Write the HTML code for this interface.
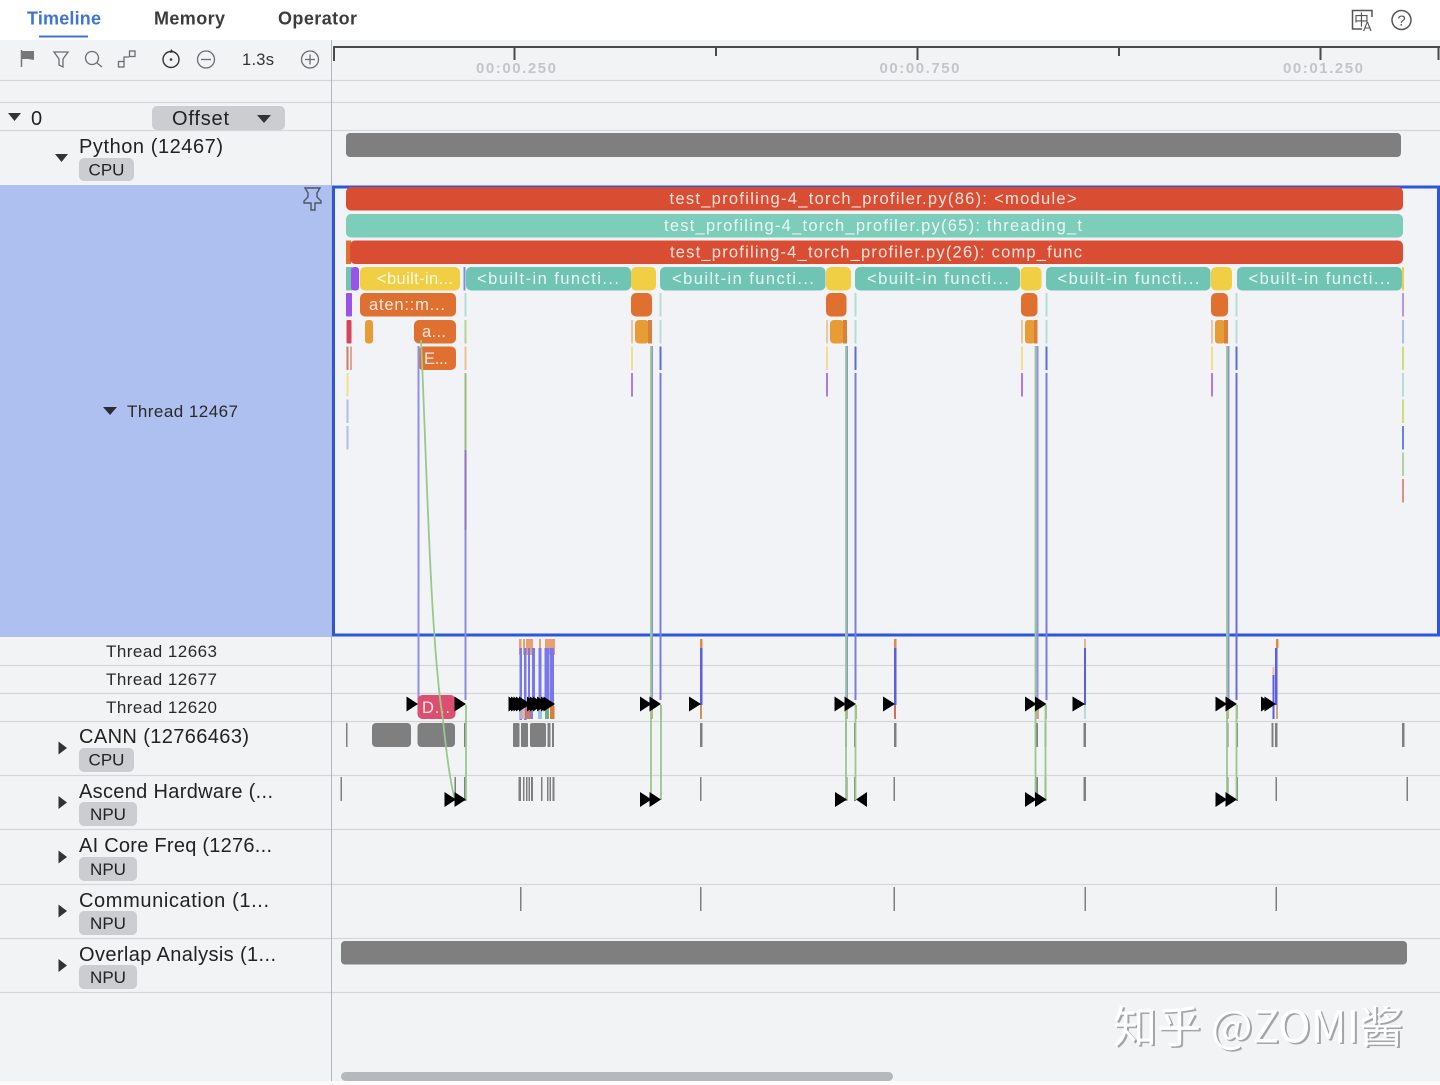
<!DOCTYPE html>
<html><head><meta charset="utf-8"><style>
html,body{margin:0;padding:0;background:#f2f3f5;width:1440px;height:1085px;overflow:hidden}
svg{display:block}
text{font-family:"Liberation Sans","Noto Sans CJK SC",sans-serif}
.l{font-size:20px;fill:#222}
.t{font-size:17px;fill:#2a2a2a}
.b{font-size:16.5px;fill:#fff;text-anchor:middle;opacity:.85}
.p{font-size:17px;fill:#222;text-anchor:middle}
.r{font-size:15px;fill:#c3c5c8;font-weight:bold;text-anchor:middle}
.ic{fill:none;stroke:#6b6e72;stroke-width:1.3}
.d{fill:none;stroke:#555;stroke-width:1.5}
.s{stroke:#d5d6d9;stroke-width:1.3}
</style></head><body>
<svg width="1440" height="1085" viewBox="0 0 1440 1085" xmlns="http://www.w3.org/2000/svg">
<rect width="1440" height="1085" fill="#f2f3f5"/>
<rect width="1440" height="40" fill="#fff"/>
<text x="27" y="24.500" font-size="18" font-weight="bold" fill="#3f74d0" textLength="74">Timeline</text>
<text x="154" y="24.500" font-size="18" font-weight="bold" fill="#3c3c3c" textLength="71">Memory</text>
<text x="278" y="24.500" font-size="18" font-weight="bold" fill="#3c3c3c" textLength="79">Operator</text>
<rect x="39" y="35.500" width="49" height="2" fill="#3f74d0"/>
<!-- top right icons -->
<path d="M1362 29H1352.500V10.500H1372V17" class="d"/>
<text x="1354" y="25" font-size="15" fill="#555" style="font-family:'Noto Sans CJK SC',sans-serif">中</text>
<text x="1363" y="31" font-size="13" fill="#555">A</text>
<circle cx="1401.500" cy="20" r="9.500" class="d"/>
<text x="1401.500" y="25.500" font-size="15" fill="#555" text-anchor="middle">?</text>
<!-- toolbar icons -->
<path d="M21.500 50V67" stroke="#777" stroke-width="1.500"/><path d="M22 51H34V60L28 59H22Z" fill="#777"/>
<path d="M54 52H68L63 59V67L59 65V59Z" class="ic"/>
<circle cx="92" cy="58" r="6.500" class="ic"/><path d="M97 63L102 67" class="ic"/>
<rect x="118.500" y="61.500" width="5.500" height="5.500" class="ic"/><rect x="129.500" y="51" width="5.500" height="5.500" class="ic"/><path d="M124 61V57H129" class="ic"/>
<circle cx="171" cy="59.500" r="8" fill="none" stroke="#333" stroke-width="1.400"/><circle cx="171" cy="59.500" r="1.300" fill="#333"/><path d="M171 49L174 52L170 53Z" fill="#333"/>
<circle cx="206" cy="59.500" r="8.500" class="ic"/><path d="M201 59.500H211" class="ic"/>
<text x="258" y="65" font-size="16.500" fill="#333" text-anchor="middle" textLength="32">1.3s</text>
<circle cx="310" cy="59.500" r="8.500" class="ic"/><path d="M305 59.500H315M310 54.500V64.500" class="ic"/>
<!-- ruler -->
<path d="M333 47H1440" stroke="#4a4a4a" stroke-width="2"/>
<path d="M334 47V61M514.500 47V60M716 47V56M917.500 47V60M1119 47V56M1320.500 47V60M1438.500 47V60" stroke="#4a4a4a" stroke-width="2"/>
<text x="516" y="73" class="r" textLength="80">00:00.250</text><text x="919.500" y="73" class="r" textLength="80">00:00.750</text><text x="1323" y="73" class="r" textLength="80">00:01.250</text>
<!-- row lines -->
<g class="s">
<path d="M0 80.500H1440M0 102.500H1440M0 130.500H1440M0 665.500H1440M0 693.500H1440M0 721.500H1440M0 775.500H1440M0 829.500H1440M0 884.500H1440M0 938.500H1440M0 992.500H1440"/>
</g>
<!-- left selected -->
<rect x="0" y="185" width="332" height="452" fill="#aec0f0"/>
<path d="M331.500 40V1081" stroke="#b4b6ba" stroke-width="1"/>
<rect x="333.500" y="187" width="1105" height="448" fill="#f2f3f6" stroke="#2c55e0" stroke-width="3"/>
<!-- pin -->
<path d="M305 188H320L317 193V197L321 201V203H315V210H311V203H304V201L308 197V193Z" fill="none" stroke="#4b5568" stroke-width="1.400"/>
<!-- labels -->
<path d="M8 113H21L14.500 121Z" fill="#333"/>
<text x="31" y="125" class="l">0</text>
<rect x="152" y="106" width="133" height="24" rx="5" fill="#cbcdd0"/>
<text x="172" y="125" class="l" textLength="57">Offset</text>
<path d="M257 115H271L264 123Z" fill="#333"/>
<path d="M55 154H68L61.500 162Z" fill="#333"/>
<text x="79" y="153" class="l" textLength="144">Python (12467)</text>
<rect x="79" y="158" width="55" height="23" rx="5" fill="#cbcdd0"/><text x="106.500" y="175.500" class="p">CPU</text>
<path d="M103 407H117L110 415Z" fill="#2a2d33"/>
<text x="127" y="417" class="t" fill="#1f2530" textLength="111">Thread 12467</text>
<text x="106" y="657" class="t" textLength="111">Thread 12663</text>
<text x="106" y="685" class="t" textLength="111">Thread 12677</text>
<text x="106" y="713" class="t" textLength="111">Thread 12620</text>
<path d="M58.500 741.500L67 748L58.500 754.500ZM58.500 796L67 802.500L58.500 809ZM58.500 850.500L67 857L58.500 863.500ZM58.500 904.500L67 911L58.500 917.500ZM58.500 959L67 965.500L58.500 972Z" fill="#333"/>
<text x="79" y="743" class="l" textLength="170">CANN (12766463)</text>
<rect x="79" y="748" width="55" height="24" rx="5" fill="#cbcdd0"/><text x="106.500" y="765.500" class="p">CPU</text>
<text x="79" y="798" class="l" textLength="194">Ascend Hardware (...</text>
<rect x="79" y="802" width="58" height="24" rx="5" fill="#cbcdd0"/><text x="108" y="820" class="p">NPU</text>
<text x="79" y="852" class="l" textLength="193">AI Core Freq (1276...</text>
<rect x="79" y="857" width="58" height="24" rx="5" fill="#cbcdd0"/><text x="108" y="875" class="p">NPU</text>
<text x="79" y="907" class="l" textLength="190">Communication (1...</text>
<rect x="79" y="911" width="58" height="24" rx="5" fill="#cbcdd0"/><text x="108" y="929" class="p">NPU</text>
<text x="79" y="961" class="l" textLength="197">Overlap Analysis (1...</text>
<rect x="79" y="965" width="58" height="24" rx="5" fill="#cbcdd0"/><text x="108" y="983" class="p">NPU</text>
<!-- grey bars -->
<rect x="346" y="133" width="1055" height="24" rx="4" fill="#7f7f7f"/>
<rect x="341" y="941" width="1066" height="23.500" rx="4" fill="#7f7f7f"/>
<!-- flame top rows -->
<rect x="346" y="187" width="1057" height="23.500" rx="5" fill="#d94e33"/>
<text x="873" y="204" class="b" textLength="407">test_profiling-4_torch_profiler.py(86): &lt;module&gt;</text>
<rect x="346" y="214" width="1057" height="23.500" rx="5" fill="#7ccdb9"/>
<text x="873" y="231" class="b" textLength="418">test_profiling-4_torch_profiler.py(65): threading_t</text>
<rect x="346" y="240.500" width="5" height="23.500" fill="#e07030"/>
<rect x="350" y="240.500" width="1053" height="23.500" rx="5" fill="#d94e33"/>
<text x="876" y="257.500" class="b" textLength="412">test_profiling-4_torch_profiler.py(26): comp_func</text>
<!-- row 4 -->
<rect x="346" y="267" width="6" height="23.500" fill="#6fc4b4"/>
<rect x="351" y="267" width="8" height="23.500" rx="3" fill="#9a52e8"/>
<rect x="360" y="267" width="100" height="23.500" rx="5" fill="#f0cf45"/>
<text x="415" y="284" class="b" textLength="76">&lt;built-in...</text>
<rect x="463.500" y="267" width="2" height="23.500" fill="#7a90e0"/>
<rect x="466" y="267" width="165" height="23.500" rx="5" fill="#6fc4b4"/>
<text x="548" y="284" class="b" textLength="142">&lt;built-in functi...</text>
<rect x="631" y="267" width="25" height="23.500" rx="5" fill="#f0cf45"/>
<rect x="660" y="267" width="165.500" height="23.500" rx="5" fill="#6fc4b4"/>
<text x="743" y="284" class="b" textLength="142">&lt;built-in functi...</text>
<rect x="826" y="267" width="25" height="23.500" rx="5" fill="#f0cf45"/>
<rect x="855" y="267" width="165" height="23.500" rx="5" fill="#6fc4b4"/>
<text x="938" y="284" class="b" textLength="142">&lt;built-in functi...</text>
<rect x="1020.500" y="267" width="21" height="23.500" rx="5" fill="#f0cf45"/>
<rect x="1046" y="267" width="164.500" height="23.500" rx="5" fill="#6fc4b4"/>
<text x="1128.500" y="284" class="b" textLength="142">&lt;built-in functi...</text>
<rect x="1211" y="267" width="21" height="23.500" rx="5" fill="#f0cf45"/>
<rect x="1237" y="267" width="165" height="23.500" rx="5" fill="#6fc4b4"/>
<text x="1319.500" y="284" class="b" textLength="142">&lt;built-in functi...</text>
<rect x="1402" y="267" width="2" height="23.500" fill="#f0cf45"/>
<!-- row 5 -->
<rect x="346" y="293" width="6" height="23.500" rx="1" fill="#9a52e8"/>
<rect x="360" y="293" width="96" height="23.500" rx="5" fill="#e07030"/>
<text x="407" y="310" class="b" textLength="76">aten::m...</text>
<rect x="631" y="293" width="21" height="23.500" rx="5" fill="#e07030"/>
<rect x="826" y="293" width="20.500" height="23.500" rx="5" fill="#e07030"/>
<rect x="1021" y="293" width="16.500" height="23.500" rx="5" fill="#e07030"/>
<rect x="1211" y="293" width="17" height="23.500" rx="5" fill="#e07030"/>
<g fill="#b7dcd6"><rect x="464.500" y="293" width="2" height="23.500"/><rect x="659.500" y="293" width="2" height="23.500"/><rect x="854.500" y="293" width="2" height="23.500"/><rect x="1045.500" y="293" width="2" height="23.500"/><rect x="1235.500" y="293" width="2" height="23.500"/></g>
<rect x="1402" y="293" width="2" height="23.500" fill="#b498ea"/>
<!-- row 6 -->
<rect x="346.500" y="320" width="5" height="23.500" rx="1" fill="#d6465a"/>
<rect x="365" y="320" width="8" height="23.500" rx="3" fill="#e89c35"/>
<rect x="414" y="320" width="42" height="23.500" rx="5" fill="#e07030"/>
<text x="434" y="337" class="b" textLength="24">a...</text>
<g fill="#e89c35"><rect x="635" y="320" width="14" height="23.500" rx="4"/><rect x="830" y="320" width="14" height="23.500" rx="4"/><rect x="1025" y="320" width="10" height="23.500" rx="3"/><rect x="1215" y="320" width="10" height="23.500" rx="3"/></g>
<g fill="#d9813a"><rect x="648" y="320" width="4" height="23.500"/><rect x="843" y="320" width="4" height="23.500"/><rect x="1034" y="320" width="3.500" height="23.500"/><rect x="1224" y="320" width="4" height="23.500"/></g>
<g fill="#ecc6a0"><rect x="631" y="320" width="2" height="23.500"/><rect x="826" y="320" width="2" height="23.500"/><rect x="1021" y="320" width="2" height="23.500"/><rect x="1211" y="320" width="2" height="23.500"/></g>
<g fill="#b7dcd6"><rect x="659.500" y="320" width="2" height="23.500"/><rect x="854.500" y="320" width="2" height="23.500"/><rect x="1045.500" y="320" width="2" height="23.500"/><rect x="1235.500" y="320" width="2" height="23.500"/></g>
<rect x="464.500" y="320" width="2" height="23.500" fill="#b5d38a"/>
<rect x="1402" y="320" width="2" height="23.500" fill="#a9c2e8"/>
<!-- row 7 -->
<rect x="346.500" y="346.500" width="2" height="23.500" fill="#d07a68"/><rect x="350" y="346.500" width="2" height="23.500" fill="#e2a595"/>
<rect x="418" y="346.500" width="38" height="23.500" rx="5" fill="#e07030"/>
<text x="436" y="364" class="b" textLength="24">E...</text>
<rect x="464.500" y="346.500" width="2" height="23.500" fill="#ecc38e"/>
<g fill="#efe08f"><rect x="631" y="346.500" width="2" height="23.500"/><rect x="826" y="346.500" width="2" height="23.500"/><rect x="1021" y="346.500" width="2" height="23.500"/><rect x="1211" y="346.500" width="2" height="23.500"/></g>
<g fill="#5a6ce0"><rect x="659.500" y="346.500" width="2" height="23.500"/><rect x="854.500" y="346.500" width="2" height="23.500"/><rect x="1045.500" y="346.500" width="2" height="23.500"/><rect x="1235.500" y="346.500" width="2" height="23.500"/></g>
<rect x="1402" y="346.500" width="2" height="23.500" fill="#cfdc7a"/>
<!-- lower left/right stubs -->
<rect x="346.500" y="373" width="2" height="23.500" fill="#efe08f"/>
<rect x="346.500" y="399.500" width="2" height="23.500" fill="#a9c2e8"/>
<rect x="346.500" y="426" width="2" height="23.500" fill="#a9c2e8"/>
<g fill="#a97ce8"><rect x="631" y="373" width="2" height="23.500"/><rect x="826" y="373" width="2" height="23.500"/><rect x="1021" y="373" width="2" height="23.500"/><rect x="1211" y="373" width="2" height="23.500"/></g>
<rect x="1402" y="373" width="2" height="23.500" fill="#b7dcd6"/>
<rect x="1402" y="399.500" width="2" height="23.500" fill="#cfdc7a"/>
<rect x="1402" y="426" width="2" height="23.500" fill="#6a80e8"/>
<rect x="1402" y="452.500" width="2" height="23.500" fill="#b2d0a4"/>
<rect x="1402" y="479" width="2" height="23.500" fill="#e08f85"/>
<!-- vertical flows -->
<g stroke-width="2" fill="none">
<path d="M418.500 346V700" stroke="#8f8ff0"/>
<path d="M465.500 373V700" stroke="#8a8cdc"/>
<path d="M465.500 373V450" stroke="#9dbb7e"/>
<path d="M465.500 450V530" stroke="#8c70c8"/>
<path d="M660.500 373V700" stroke="#7a7ce6"/>
<path d="M855.500 373V700" stroke="#7a7ce6"/>
<path d="M1046.500 373V700" stroke="#7a7ce6"/>
<path d="M1236.500 373V700" stroke="#6a6ce0"/>
<path d="M652 346V700" stroke="#8f8ff0"/>
<path d="M847 346V700" stroke="#8f8ff0"/>
<path d="M1037.500 346V700" stroke="#8f8ff0"/>
<path d="M1228.500 346V700" stroke="#8f8ff0"/>
</g>
<!-- thread 12620 colored tails -->
<g fill="#c9a98a"><rect x="650" y="705" width="3" height="14"/><rect x="660" y="705" width="2" height="14"/><rect x="845" y="705" width="3" height="14"/><rect x="855" y="705" width="2" height="14"/><rect x="1036" y="705" width="3" height="14"/><rect x="1045" y="705" width="2" height="14"/><rect x="1226" y="705" width="3" height="14"/><rect x="1236" y="705" width="2" height="14"/><rect x="1276" y="705" width="2" height="14"/></g>
<rect x="700" y="705" width="2" height="14" fill="#d0905a"/><rect x="894" y="705" width="2" height="14" fill="#d0705a"/><rect x="1084" y="705" width="2" height="14" fill="#b7dcd6"/>
<!-- short tops -->
<g fill="#e08a4a"><rect x="700" y="639" width="2.500" height="9"/><rect x="894" y="639" width="2.500" height="9"/><rect x="1084" y="639" width="2" height="9" opacity=".6"/><rect x="1276" y="639" width="2.500" height="9"/><rect x="1272.500" y="667" width="2" height="8" opacity=".5"/></g>
<g fill="#5c5ce4"><rect x="700" y="648" width="2.500" height="57"/><rect x="894" y="648" width="2.500" height="57"/><rect x="1084" y="648" width="2" height="57"/><rect x="1275" y="648" width="2.500" height="57"/><rect x="1272.500" y="675" width="2" height="44"/></g>
<!-- cluster -->
<g fill="#e8a070"><rect x="519" y="639" width="2.500" height="16"/><rect x="523" y="639" width="2" height="16"/><rect x="526" y="639" width="7" height="16"/><rect x="539" y="639" width="2" height="16"/><rect x="545" y="639" width="10" height="16"/></g>
<g fill="#7878ec"><rect x="519.500" y="648" width="2.500" height="72"/><rect x="524" y="648" width="2.500" height="72"/><rect x="528" y="648" width="2" height="60"/><rect x="532" y="648" width="3" height="60"/><rect x="538.500" y="648" width="3" height="60"/><rect x="544.500" y="648" width="5" height="60"/><rect x="550" y="648" width="4" height="60"/></g>
<g><rect x="520" y="706" width="2" height="13" fill="#a8b0d8"/><rect x="522" y="706" width="3" height="13" fill="#e8b090"/><rect x="526" y="706" width="4" height="13" fill="#d07a5a"/><rect x="530" y="706" width="3" height="13" fill="#8a7ae0"/><rect x="538" y="706" width="4" height="13" fill="#9ac0ee"/><rect x="545" y="706" width="4" height="13" fill="#70b080"/><rect x="550" y="706" width="4.500" height="13" fill="#e07a3a"/></g>
<!-- D block -->
<rect x="417.500" y="695" width="38" height="24" rx="5" fill="#dc4f6e"/>
<text x="436" y="713" class="b" textLength="28">D...</text>
<!-- grey ticks -->
<g fill="#7f7f7f">
<rect x="346" y="723" width="1.500" height="24"/>
<rect x="372" y="723" width="39" height="24" rx="4"/>
<rect x="417.500" y="723" width="37.500" height="24" rx="4"/>
<rect x="464" y="723" width="2.500" height="24"/>
<rect x="513" y="723" width="6.500" height="24" rx="1"/><rect x="521" y="723" width="7" height="24" rx="1"/><rect x="530" y="723" width="16" height="24" rx="2"/><rect x="547.500" y="723" width="3" height="24"/><rect x="552" y="723" width="2" height="24"/>
<rect x="700" y="723" width="2.500" height="24"/><rect x="845" y="723" width="2" height="24"/><rect x="854" y="723" width="2" height="24"/><rect x="894" y="723" width="2.500" height="24"/><rect x="1036" y="723" width="2" height="24"/><rect x="1044.500" y="723" width="2" height="24"/><rect x="1083.500" y="723" width="2.500" height="24"/><rect x="1226.500" y="723" width="2" height="24"/><rect x="1236" y="723" width="2" height="24"/><rect x="1271.500" y="723" width="2" height="24"/><rect x="1275" y="723" width="2.500" height="24"/><rect x="1402" y="723" width="2.500" height="24"/>
<rect x="340.500" y="777" width="1.500" height="24"/>
<rect x="454.500" y="777" width="1.500" height="24"/><rect x="464" y="777" width="2.500" height="24"/>
<rect x="518.500" y="777" width="2.500" height="24"/><rect x="523" y="777" width="1.500" height="24"/><rect x="526" y="777" width="1.500" height="24"/><rect x="528.500" y="777" width="1.500" height="24"/><rect x="531" y="777" width="2" height="24"/><rect x="541" y="777" width="1.500" height="24"/><rect x="547" y="777" width="1.500" height="24"/><rect x="549.500" y="777" width="1.500" height="24"/><rect x="552.500" y="777" width="2" height="24"/>
<rect x="700" y="777" width="1.500" height="24"/><rect x="845.500" y="777" width="2" height="24"/><rect x="854" y="777" width="2" height="24"/><rect x="893.500" y="777" width="1.500" height="24"/><rect x="1036" y="777" width="2" height="24"/><rect x="1044.500" y="777" width="2" height="24"/><rect x="1083.500" y="777" width="2.500" height="24"/><rect x="1226.500" y="777" width="2" height="24"/><rect x="1236" y="777" width="2" height="24"/><rect x="1275.500" y="777" width="1.500" height="24"/><rect x="1406.500" y="777" width="1.500" height="24"/>
<rect x="520" y="887" width="1.500" height="24"/><rect x="700" y="887" width="1.500" height="24"/><rect x="893.500" y="887" width="1.500" height="24"/><rect x="1084.500" y="887" width="1.500" height="24"/><rect x="1275.500" y="887" width="1.500" height="24"/>
</g>
<!-- green flows -->
<g fill="none" stroke="#97c98a" stroke-width="1.800">
<path d="M421 340C426 440 430 640 443 720C447 760 451 785 455 800"/>
<path d="M466 705V800"/>
<path d="M651 346V800"/><path d="M661 705V800"/>
<path d="M846 346V800"/><path d="M855.500 705V800"/>
<path d="M1035.500 346V800"/><path d="M1045.500 705V800"/>
<path d="M1227 346V800"/><path d="M1236.500 705V800"/>
</g>
<!-- triangles -->
<g fill="#000">
<path d="M406.500 696.500L418 704L406.500 711.500ZM454.500 696.500L466 704L454.500 711.500Z"/>
<path d="M508.500 696.500L520 704L508.500 711.500ZM511 696.500L522.500 704L511 711.500ZM513.500 696.500L525 704L513.500 711.500ZM516 696.500L527.500 704L516 711.500ZM519 696.500L530.500 704L519 711.500ZM527 696.500L538.500 704L527 711.500ZM530 696.500L541.500 704L530 711.500ZM533 696.500L544.500 704L533 711.500ZM537 696.500L548.500 704L537 711.500ZM541 696.500L552.500 704L541 711.500ZM543.500 696.500L555 704L543.500 711.500Z"/>
<path d="M640 696.500L651.500 704L640 711.500ZM649.500 696.500L661 704L649.500 711.500Z"/>
<path d="M689 696.500L701 704L689 711.500Z"/>
<path d="M834.500 696.500L846 704L834.500 711.500ZM844.500 696.500L856 704L844.500 711.500Z"/>
<path d="M883 696.500L895 704L883 711.500Z"/>
<path d="M1025 696.500L1036.500 704L1025 711.500ZM1035 696.500L1046.500 704L1035 711.500Z"/>
<path d="M1072.500 696.500L1085 704L1072.500 711.500Z"/>
<path d="M1215.500 696.500L1227 704L1215.500 711.500ZM1225.500 696.500L1237 704L1225.500 711.500Z"/>
<path d="M1261 696.500L1272.500 704L1261 711.500ZM1264.500 696.500L1276 704L1264.500 711.500Z"/>
<path d="M444.500 792L456 799.500L444.500 807ZM454.500 792L466 799.500L454.500 807Z"/>
<path d="M640 792L651.500 799.500L640 807ZM649.500 792L661 799.500L649.500 807Z"/>
<path d="M835 792L847 799.500L835 807Z"/>
<path d="M867 792L856 799.500L867 807Z"/>
<path d="M1025 792L1036.500 799.500L1025 807ZM1035 792L1046.500 799.500L1035 807Z"/>
<path d="M1215.500 792L1227 799.500L1215.500 807ZM1225.500 792L1237 799.500L1225.500 807Z"/>
</g>
<!-- scrollbar -->
<rect x="341" y="1072" width="552" height="9" rx="4.500" fill="#b6b8bb"/>
<rect y="1081" width="1440" height="4" fill="#fbfbfc"/>
<!-- watermark -->
<text x="1115" y="1044" font-size="44" fill="#a3a5a8" style="font-family:'Noto Sans CJK SC',sans-serif">知乎 @ZOMI酱</text>
<text x="1113" y="1042.500" font-size="44" fill="#fff" style="font-family:'Noto Sans CJK SC',sans-serif">知乎 @ZOMI酱</text>
</svg>
</body></html>
